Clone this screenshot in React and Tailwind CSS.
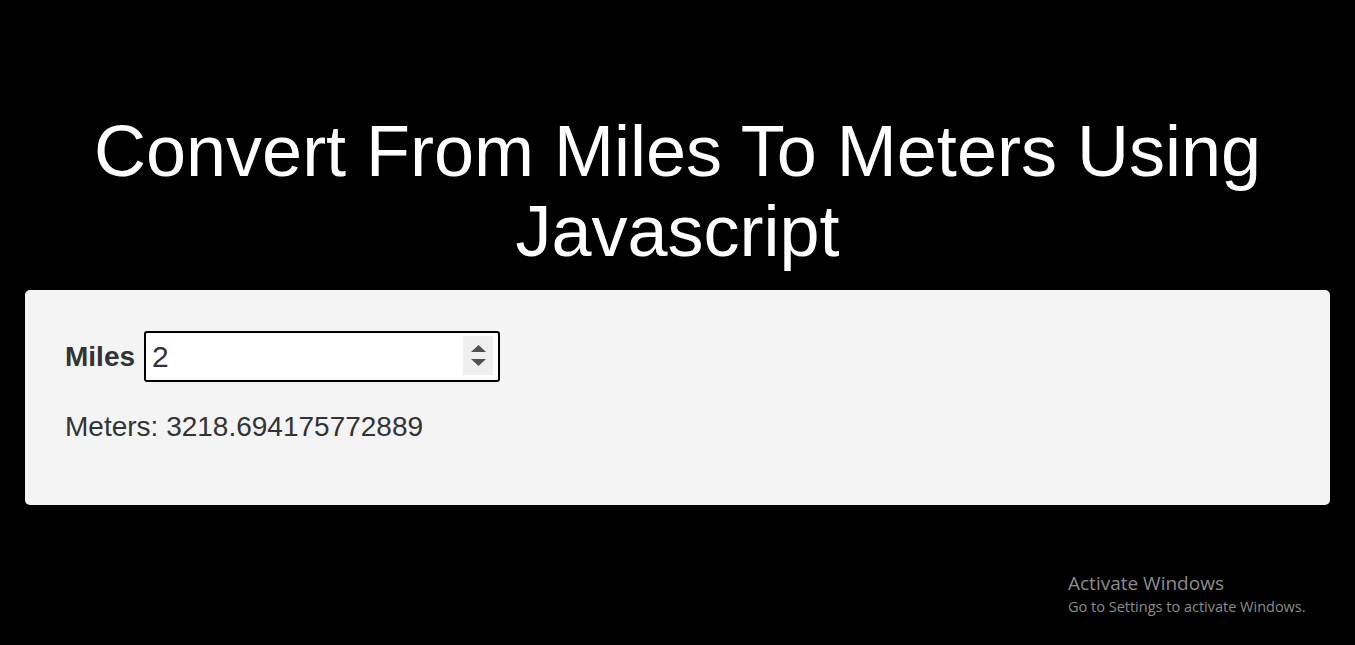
import { useState } from 'react';

export default function App() {
  const [miles, setMiles] = useState('2');
  const meters = miles === '' ? 0 : parseFloat(miles) / 0.00062137;

  return (
    <div className="min-h-[645px] bg-black relative font-['Liberation_Sans',Arial,sans-serif] overflow-hidden">
      <div className="px-[25px] pt-[111px]">
        <h1 className="text-white text-center text-[72px] leading-[80px] font-normal">
          Convert From Miles To Meters Using Javascript
        </h1>

        <div className="mt-[19px] bg-[#f4f4f4] rounded-[5px] h-[215px] px-10 pt-[41px]">
          <div className="flex items-center">
            <label htmlFor="miles" className="text-[28px] leading-[32px] font-bold text-[#333] mr-[9px]">
              Miles
            </label>
            <div className="relative">
              <input
                id="miles"
                type="text"
                autoFocus
                value={miles}
                onChange={(e) => setMiles(e.target.value)}
                className="w-[356px] h-[51px] border-2 border-black rounded-[3px] bg-white pl-[6px] text-[30px] text-[#333] outline-none caret-[#333]"
              />
              {/* spinner buttons */}
              <div className="absolute right-[7px] top-[5px] w-[30px] h-[39px] bg-[#efefef] flex flex-col items-center justify-center gap-[7px]">
                <svg width="15" height="7" viewBox="0 0 15 7">
                  <path d="M7.5 0 L15 7 L0 7 Z" fill="#505050" />
                </svg>
                <svg width="15" height="7" viewBox="0 0 15 7">
                  <path d="M0 0 L15 0 L7.5 7 Z" fill="#505050" />
                </svg>
              </div>
            </div>
          </div>

          <p className="mt-[29px] text-[28px] leading-[32px] text-[#333]">Meters: {meters}</p>
        </div>
      </div>

      {/* Windows watermark */}
      <div className="absolute left-[1068px] top-[571px] text-[#8c8c8c] font-['Open_Sans',sans-serif]">
        <div className="text-[19px] leading-[24px]">Activate Windows</div>
        <div className="mt-[2px] text-[14.5px] leading-[20px]">Go to Settings to activate Windows.</div>
      </div>
    </div>
  );
}
